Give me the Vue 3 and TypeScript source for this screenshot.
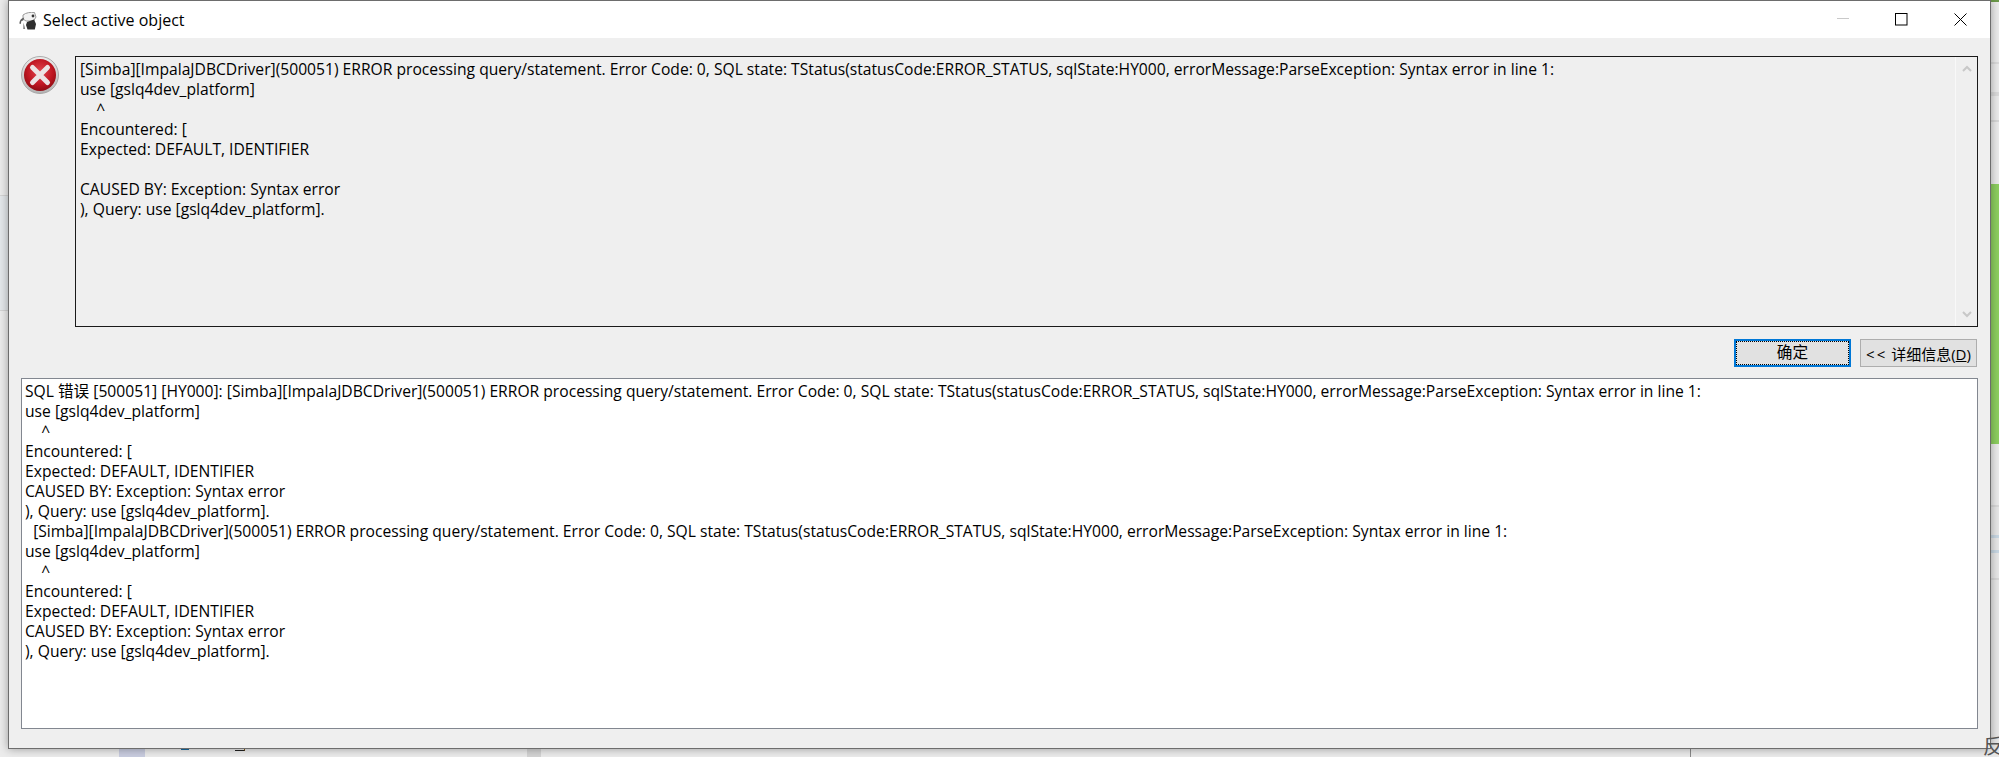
<script setup lang="ts">
const messageText = `[Simba][ImpalaJDBCDriver](500051) ERROR processing query/statement. Error Code: 0, SQL state: TStatus(statusCode:ERROR_STATUS, sqlState:HY000, errorMessage:ParseException: Syntax error in line 1:
use [gslq4dev_platform]
    ^
Encountered: [
Expected: DEFAULT, IDENTIFIER

CAUSED BY: Exception: Syntax error
), Query: use [gslq4dev_platform].`

const detailText = `SQL 错误 [500051] [HY000]: [Simba][ImpalaJDBCDriver](500051) ERROR processing query/statement. Error Code: 0, SQL state: TStatus(statusCode:ERROR_STATUS, sqlState:HY000, errorMessage:ParseException: Syntax error in line 1:
use [gslq4dev_platform]
    ^
Encountered: [
Expected: DEFAULT, IDENTIFIER
CAUSED BY: Exception: Syntax error
), Query: use [gslq4dev_platform].
  [Simba][ImpalaJDBCDriver](500051) ERROR processing query/statement. Error Code: 0, SQL state: TStatus(statusCode:ERROR_STATUS, sqlState:HY000, errorMessage:ParseException: Syntax error in line 1:
use [gslq4dev_platform]
    ^
Encountered: [
Expected: DEFAULT, IDENTIFIER
CAUSED BY: Exception: Syntax error
), Query: use [gslq4dev_platform].`
</script>

<template>
  <div class="desktop">
    <div class="bg-band"></div>
    <div class="bg-right"></div>
    <div class="bg-green"></div>
    <div class="bg-green-top"></div>
    <div class="bg-lav"></div>
    <div class="bg-blue"></div>
    <div class="bg-mark"></div>
    <div class="bg-div"></div>
    <div class="bg-div2"></div>
    <span class="bg-glyph">反</span>

    <section class="window">
      <header class="titlebar">
        <svg class="app-icon" width="18" height="18" viewBox="0 0 18 18">
          <path d="M4 3 C7 0.5 12 0 15.5 0.5 L17 5 L14.5 9 L7 9 L4 7 Z" fill="#f2f2f2" stroke="#999" stroke-width="1" />
          <path d="M0.3 11.5 C0.8 8 2.5 6.2 5.2 5.6 L4.2 8.5 L2.4 9 L1.8 12 Z" fill="#5c5c5c" />
          <circle cx="14" cy="4" r="1.4" fill="#333" />
          <path d="M8 10 L15 7.5 L17 12 L15.8 17.5 L8.5 17.5 L7 13 Z" fill="#2e2e2e" />
          <path d="M4.5 10.5 L6.2 17 L4.2 17 Z" fill="#808080" />
        </svg>
        <span class="title">Select active object</span>
        <div class="caption">
          <span class="cap-btn"><svg width="13" height="13" viewBox="0 0 13 13"><path d="M1 5.5H13" stroke="#c9c9c9" /></svg></span>
          <span class="cap-btn"><svg width="13" height="13" viewBox="0 0 13 13"><rect x="0.5" y="0.5" width="11.5" height="11.5" fill="none" stroke="#000" /></svg></span>
          <span class="cap-btn"><svg width="13" height="13" viewBox="0 0 13 13"><path d="M0.5 0.5L12.5 12.5M12.5 0.5L0.5 12.5" stroke="#000" /></svg></span>
        </div>
      </header>

      <main class="content">
        <div class="top-row">
          <svg class="err-icon" width="38" height="38" viewBox="0 0 38 38">
            <defs>
              <radialGradient id="redFill" cx="50%" cy="40%" r="65%">
                <stop offset="0" stop-color="#e24750" />
                <stop offset="0.6" stop-color="#c01722" />
                <stop offset="1" stop-color="#850a10" />
              </radialGradient>
              <linearGradient id="ring" x1="0" y1="0" x2="0" y2="1">
                <stop offset="0" stop-color="#ececec" />
                <stop offset="1" stop-color="#b4b4b4" />
              </linearGradient>
            </defs>
            <circle cx="19" cy="19" r="18.5" fill="url(#ring)" stroke="#9a9a9a" stroke-width="0.8" />
            <circle cx="19" cy="19" r="16" fill="url(#redFill)" />
            <path d="M11.5 11.5L26.5 26.5M26.5 11.5L11.5 26.5" stroke="#ece4e4" stroke-width="5" stroke-linecap="round" />
          </svg>
          <div class="message">
            <div class="message-text">{{ messageText }}</div>
            <div class="scrollbar">
              <svg width="10" height="7" viewBox="0 0 10 7"><path d="M1 6L5 2L9 6" fill="none" stroke="#c8c8c8" stroke-width="2" /></svg>
              <svg width="10" height="7" viewBox="0 0 10 7"><path d="M1 1L5 5L9 1" fill="none" stroke="#c8c8c8" stroke-width="2" /></svg>
            </div>
          </div>
        </div>

        <div class="actions">
          <button class="btn btn-ok" type="button"><span class="focus">确定</span></button>
          <button class="btn btn-more" type="button"><span class="chev">&lt;&lt;</span> 详细信息(<u>D</u>)</button>
        </div>

        <div class="details">{{ detailText }}</div>
      </main>
    </section>
  </div>
</template>

<style>
html, body { margin: 0; padding: 0; overflow: hidden; }
</style>

<style scoped>
.desktop {
  position: relative;
  width: 1999px;
  height: 757px;
  overflow: hidden;
  background: #ececec;
  font-family: "Open Sans", "Noto Sans CJK SC", sans-serif;
  font-size: 15.65px;
  color: #000;
}
.bg-band { position: absolute; left: 0; top: 195px; width: 8px; height: 116px; background: #e4e8eb; border-top: 1px solid #d4d4d4; border-bottom: 1px solid #d4d4d4; box-sizing: border-box; }
.bg-right {
  position: absolute;
  right: 0;
  top: 0;
  width: 9px;
  height: 757px;
  background: linear-gradient(to bottom,
    #ececec 0 62px, #dcdcdc 62px 64px, #ececec 64px 92px, #dcdcdc 92px 96px, #ececec 96px 120px, #d8d8d8 120px 122px, #ececec 122px 505px,
    #dadada 505px 507px, #e8e8e8 507px 535px, #c9d8e4 535px 538px, #e8e8e8 538px 550px, #c9d8e4 550px 553px, #e8e8e8 553px 578px,
    #d8d8d8 578px 580px, #e8e8e8 580px 757px);
}
.bg-green { position: absolute; right: 0; top: 184px; width: 9px; height: 260px; background: #8dcf60; }
.bg-green-top { position: absolute; left: 1948px; top: 0; width: 51px; height: 2px; background: #6c9a4a; }
.bg-lav { position: absolute; left: 119px; top: 749px; width: 26px; height: 8px; background: #c9cde0; }
.bg-blue { position: absolute; left: 181px; top: 749px; width: 8px; height: 1px; background: #1a6aa0; }
.bg-mark { position: absolute; left: 235px; top: 749px; width: 10px; height: 2px; border-bottom: 1px solid #222; border-right: 1px solid #8a5a10; box-sizing: border-box; }
.bg-div { position: absolute; left: 527px; top: 749px; width: 14px; height: 8px; background: #d4d4d4; }
.bg-div2 { position: absolute; left: 1690px; top: 749px; width: 1px; height: 8px; background: #8a8a8a; }
.bg-glyph { position: absolute; left: 1983px; top: 733px; z-index: 2; font-size: 20px; line-height: 26px; color: #555; font-family: "Noto Sans CJK SC", sans-serif; }

.window {
  position: absolute;
  left: 8px;
  top: 0;
  width: 1983px;
  height: 749px;
  box-sizing: border-box;
  border: 1px solid #6d6d6d;
  background: #efefef;
  box-shadow: 0 0 9px rgba(0, 0, 0, 0.35);
  display: flex;
  flex-direction: column;
}
.titlebar {
  height: 37px;
  flex: none;
  background: #fff;
  display: flex;
  align-items: center;
  padding-left: 10px;
}
.app-icon { flex: none; margin-top: 3px; }
.title { margin-left: 6px; font-size: 16px; }
.caption { margin-left: auto; display: flex; align-items: center; }
.cap-btn { width: 59px; height: 37px; display: flex; align-items: center; justify-content: center; }

.content { flex: 1; padding: 18px 12px 0; display: flex; flex-direction: column; }
.top-row { display: flex; gap: 16px; height: 271px; }
.err-icon { flex: none; }
.message {
  flex: 1;
  box-sizing: border-box;
  border: 1px solid #1a1a1a;
  display: flex;
  min-width: 0;
}
.message-text {
  flex: 1;
  white-space: pre;
  line-height: 20px;
  padding: 2px 0 0 4px;
  overflow: hidden;
}
.scrollbar {
  width: 22px;
  flex: none;
  border-left: 1px solid #f8f8f8;
  display: flex;
  flex-direction: column;
  align-items: center;
  justify-content: space-between;
  padding: 8px 0;
  box-sizing: border-box;
}
.actions { display: flex; justify-content: flex-end; gap: 9px; margin-top: 12px; padding-right: 1px; }
.btn {
  height: 28px;
  box-sizing: border-box;
  background: #e1e1e1;
  font: inherit;
  color: #000;
  padding: 0;
}
.btn-ok { width: 117px; border: 2px solid #0078d7; padding: 0; }
.focus { display: block; height: 100%; box-sizing: border-box; border: 1px dotted #000; line-height: 21px; }
.btn-more { width: 117px; border: 1px solid #adadad; white-space: nowrap; font-size: 15px; }
.chev { letter-spacing: 2px; }
.details {
  margin-top: 11px;
  height: 351px;
  box-sizing: border-box;
  background: #fff;
  border: 1px solid #828790;
  white-space: pre;
  line-height: 20px;
  padding: 2px 0 0 3px;
  overflow: hidden;
}
</style>
